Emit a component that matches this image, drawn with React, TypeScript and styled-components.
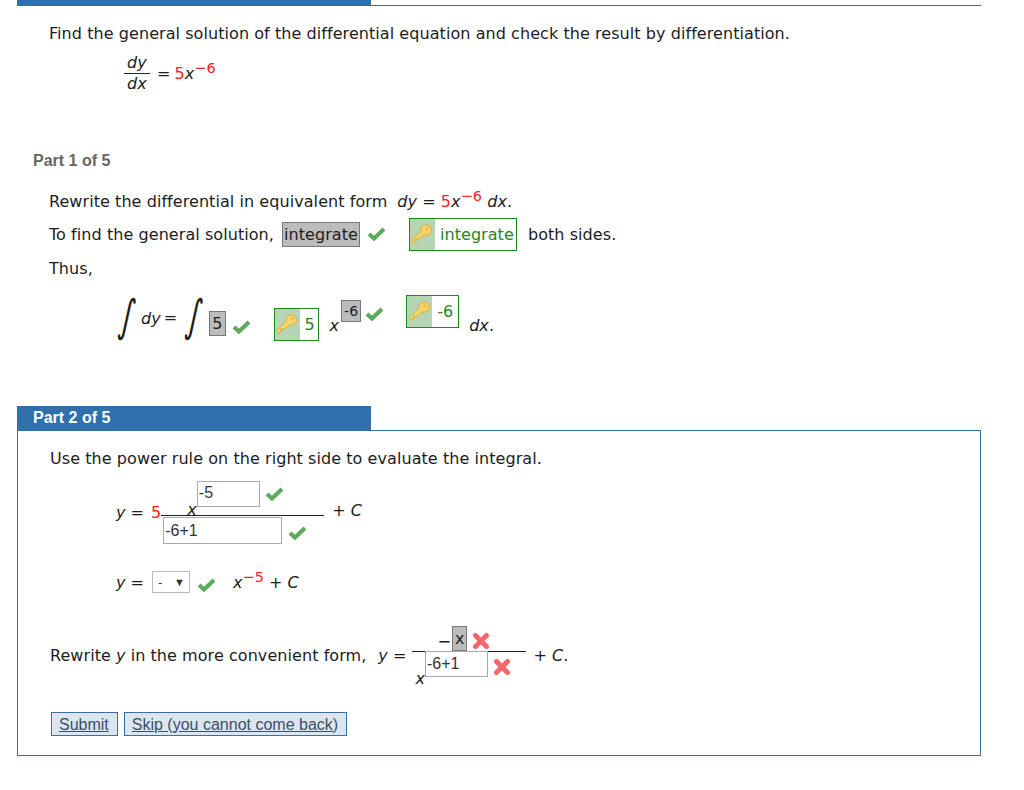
import React from 'react';
import styled, { createGlobalStyle } from 'styled-components';

const GlobalStyle = createGlobalStyle`
  html, body {
    margin: 0;
    padding: 0;
    background: #fff;
  }
  body {
    font-family: "DejaVu Sans", Verdana, sans-serif;
    font-size: 16px;
    letter-spacing: 0.065px;
    color: #1c1c1c;
  }
`;

const Tick: React.FC = () => (
  <TickSvg viewBox="0 0 19 14" width="19" height="14">
    <path d="M2 7 L7 11.5 L17 2" fill="none" stroke="#5cab5c" strokeWidth="4.2" />
  </TickSvg>
);

const Cross: React.FC = () => (
  <TickSvg viewBox="0 0 18 18" width="18" height="18">
    <path d="M3.5 3.5 L14.5 14.5 M14.5 3.5 L3.5 14.5" fill="none" stroke="#f2666c" strokeWidth="5" strokeLinecap="round" />
  </TickSvg>
);

const KeyIcon: React.FC = () => (
  <svg viewBox="0 0 22 22" width="22" height="22">
    <path
      d="M13 2.2 C16.6 0.6 20.8 3.4 20.6 7.4 C20.4 11.2 16.4 13.2 13.2 11.8 L8.4 16.4 L7 15.4 L5.8 17 L4.6 16.2 L4.8 18.6 L2.6 20.4 L1 18.6 L1.4 16.4 L9.6 8.4 C9.2 5.8 10.6 3.2 13 2.2 Z"
      fill="#f5d364"
      stroke="#d6a63c"
      strokeWidth="0.9"
    />
    <ellipse cx="16" cy="5.8" rx="1.6" ry="1.3" fill="#e3b54a" />
  </svg>
);

const KeyAnswer: React.FC<{ text: string; width: number }> = ({ text, width }) => (
  <KeyBox style={{ width }}>
    <KeyPane>
      <KeyIcon />
    </KeyPane>
    <KeyText>{text}</KeyText>
  </KeyBox>
);

export default function App() {
  return (
    <Page>
      <GlobalStyle />
      <TopBar>
        <TopTab />
      </TopBar>

      <Prose $top={16} $left={32}>
        Find the general solution of the differential equation and check the result by differentiation.
      </Prose>
      <MathRow $top={7} $left={107} $height={40}>
        <Fraction $width={26}>
          <Num>dy</Num>
          <Den>dx</Den>
        </Fraction>
        <Op $left={7}>=</Op>
        <Red $left={4}>5</Red>
        <Var>x</Var>
        <Sup>−6</Sup>
      </MathRow>

      <PartLabel $top={58}>Part 1 of 5</PartLabel>

      <Prose $top={19} $left={32}>
        Rewrite the differential in equivalent form
        <Inline>
          <i>dy</i> = <RedText>5</RedText>
          <i>x</i>
          <SupText>−6</SupText> <i>dx</i>.
        </Inline>
      </Prose>
      <MathRow $top={3} $left={32} $height={34}>
        To find the general solution,
        <GrayBox $left={8} $tight>
          integrate
        </GrayBox>
        <Spaced $left={7}>
          <Tick />
        </Spaced>
        <Spaced $left={23}>
          <KeyAnswer text="integrate" width={108} />
        </Spaced>
        <Spaced $left={11}>both sides.</Spaced>
      </MathRow>
      <Prose $top={6} $left={32}>
        Thus,
      </Prose>

      <MathRow $top={7} $left={83} $height={52}>
        <Integral $left={18}>∫</Integral>
        <Var $left={4} $down={4}>
          dy
        </Var>
        <Op $left={3} $down={3}>
          =
        </Op>
        <Integral $left={8}>∫</Integral>
        <Spaced $left={5} $down={9}>
          <GrayBox>5</GrayBox>
        </Spaced>
        <Spaced $left={6} $down={13}>
          <Tick />
        </Spaced>
        <Spaced $left={23} $down={10}>
          <KeyAnswer text="5" width={45} />
        </Spaced>
        <Var $left={11} $down={11}>
          x
        </Var>
        <Spaced $left={2} $down={-3}>
          <GrayBox $small>-6</GrayBox>
        </Spaced>
        <Spaced $left={4} $down={0}>
          <Tick />
        </Spaced>
        <Spaced $left={22} $down={-3}>
          <KeyAnswer text="-6" width={53} />
        </Spaced>
        <Spaced $left={10} $down={11}>
          <i>dx</i>.
        </Spaced>
      </MathRow>

      <PartHeader>Part 2 of 5</PartHeader>
      <Panel>
        <Prose $top={16} $left={0}>
          Use the power rule on the right side to evaluate the integral.
        </Prose>

        <MathRow $top={8} $left={66} $height={66}>
          <Var>y</Var>
          <Op $left={5}>=</Op>
          <Red $left={7}>5</Red>
          <FractionWide>
            <Upper>
              <Var $left={26} $down={19}>
                x
              </Var>
              <FieldBox $w={63} $h={26} $line={21}>
                -5
              </FieldBox>
              <Spaced $left={5} $down={6}>
                <Tick />
              </Spaced>
            </Upper>
            <Lower>
              <FieldBox $left={2} $w={119} $h={27} $line={25}>
                -6+1
              </FieldBox>
              <Spaced $left={6} $down={9}>
                <Tick />
              </Spaced>
            </Lower>
          </FractionWide>
          <Op $left={8} $down={-2}>
            +
          </Op>
          <Var $left={5} $down={-2}>
            C
          </Var>
        </MathRow>

        <MathRow $top={25} $left={66} $height={24}>
          <Var>y</Var>
          <Op $left={5}>=</Op>
          <Dropdown>
            <span>-</span>
            <Caret>▼</Caret>
          </Dropdown>
          <Spaced $left={7} $down={3}>
            <Tick />
          </Spaced>
          <Var $left={17}>x</Var>
          <Sup>−5</Sup>
          <Op $left={5}>+</Op>
          <Var $left={5}>C</Var>
        </MathRow>

        <MathRow $top={28} $left={0} $height={66}>
          Rewrite <Var>y</Var>
          <Spaced $left={5}>in the more convenient form,</Spaced>
          <Var $left={12}>y</Var>
          <Op $left={5}>=</Op>
          <FractionMid>
            <UpperMid>
              <Minus>−</Minus>
              <GrayBox>x</GrayBox>
              <Spaced $left={5} $down={-1}>
                <Cross />
              </Spaced>
            </UpperMid>
            <LowerMid>
              <Var $left={3} $down={18}>
                x
              </Var>
              <FieldBox $w={63} $h={26} $line={24}>
                -6+1
              </FieldBox>
              <Spaced $left={5} $down={7}>
                <Cross />
              </Spaced>
            </LowerMid>
          </FractionMid>
          <Op $left={7}>+</Op>
          <Var $left={5}>C</Var>.
        </MathRow>

        <Actions>
          <ActionButton>Submit</ActionButton>
          <ActionButton>Skip (you cannot come back)</ActionButton>
        </Actions>
      </Panel>
    </Page>
  );
}

const Page = styled.div`
  width: 964px;
  height: 790px;
  margin-left: 17px;
  overflow: hidden;
`;

const TopBar = styled.div`
  height: 6px;
  border-bottom: 1px solid #2f6fab;
  box-sizing: border-box;
`;

const TopTab = styled.div`
  width: 354px;
  height: 6px;
  background: #2f6fab;
`;

const Prose = styled.div<{ $top: number; $left: number }>`
  margin-top: ${(p) => p.$top}px;
  margin-left: ${(p) => p.$left}px;
  line-height: 24px;
  white-space: nowrap;
`;

const Inline = styled.span`
  margin-left: 10px;
  white-space: pre;
`;

const RedText = styled.span`
  color: #f22;
`;

const SupText = styled.sup`
  color: #f22;
  font-size: 14.5px;
  line-height: 0;
  vertical-align: 6px;
`;

const MathRow = styled.div<{ $top: number; $left: number; $height: number }>`
  display: flex;
  align-items: center;
  margin-top: ${(p) => p.$top}px;
  margin-left: ${(p) => p.$left}px;
  height: ${(p) => p.$height}px;
  white-space: pre;
`;

const Spaced = styled.span<{ $left?: number; $down?: number }>`
  display: inline-flex;
  align-items: center;
  margin-left: ${(p) => p.$left ?? 0}px;
  transform: translateY(${(p) => p.$down ?? 0}px);
`;

const Fraction = styled.span<{ $width: number }>`
  display: inline-flex;
  flex-direction: column;
  align-items: center;
  width: ${(p) => p.$width}px;
  font-style: italic;
`;

const Num = styled.span`
  width: 100%;
  text-align: center;
  line-height: 20px;
  border-bottom: 1px solid #222;
`;

const Den = styled.span`
  line-height: 20px;
`;

const Op = styled.span<{ $left?: number; $down?: number }>`
  margin-left: ${(p) => p.$left ?? 0}px;
  transform: translateY(${(p) => p.$down ?? 0}px);
`;

const Red = styled.span<{ $left?: number }>`
  margin-left: ${(p) => p.$left ?? 0}px;
  color: #f22;
`;

const Var = styled.i<{ $left?: number; $down?: number }>`
  margin-left: ${(p) => p.$left ?? 0}px;
  transform: translateY(${(p) => p.$down ?? 0}px);
`;

const Sup = styled.span`
  color: #f22;
  font-size: 14.5px;
  transform: translateY(-5px);
`;

const PartLabel = styled.div<{ $top: number }>`
  margin-top: ${(p) => p.$top}px;
  margin-left: 16px;
  font-family: "Liberation Sans", Arial, sans-serif;
  font-weight: 700;
  font-size: 16px;
  line-height: 20px;
  letter-spacing: 0;
  color: #666;
`;

const GrayBox = styled.span<{ $left?: number; $small?: boolean; $tight?: boolean }>`
  display: inline-block;
  margin-left: ${(p) => p.$left ?? 0}px;
  padding: 0 ${(p) => (p.$tight ? 1 : 2)}px;
  background: #bcbcbc;
  border: 1px solid #777;
  font-size: ${(p) => (p.$small ? 14 : 16)}px;
  line-height: ${(p) => (p.$small ? 20 : 23)}px;
`;

const TickSvg = styled.svg`
  display: block;
`;

const KeyBox = styled.span`
  display: inline-flex;
  align-items: stretch;
  box-sizing: border-box;
  height: 33px;
  border: 1px solid #1c871c;
  background: #fff;
`;

const KeyPane = styled.span`
  display: flex;
  align-items: center;
  justify-content: center;
  width: 25px;
  background: #b5d5b5;
`;

const KeyText = styled.span`
  padding-left: 5px;
  line-height: 31px;
  color: #22861e;
`;

const Integral = styled.span<{ $left?: number }>`
  display: inline-flex;
  justify-content: center;
  width: 19px;
  margin-left: ${(p) => p.$left ?? 0}px;
  font-size: 40px;
  line-height: 52px;
  transform: translateY(2px) scale(0.72, 1.1) skewX(-16deg);
`;

const FractionWide = styled.span`
  display: inline-flex;
  flex-direction: column;
  width: 163px;
  transform: translateY(2px);
`;

const FractionMid = styled.span`
  display: inline-flex;
  flex-direction: column;
  width: 114px;
  margin-left: 6px;
  transform: translateY(-4px);
`;

const Upper = styled.span`
  display: flex;
  align-items: flex-start;
  height: 34px;
  border-bottom: 1px solid #222;
`;

const Lower = styled.span`
  display: flex;
  align-items: flex-start;
  height: 30px;
  padding-top: 1px;
`;

const UpperMid = styled.span`
  display: flex;
  align-items: flex-end;
  height: 26px;
  border-bottom: 1px solid #222;
`;

const LowerMid = styled.span`
  display: flex;
  align-items: flex-start;
  height: 27px;
  margin-top: -1px;
`;

const Minus = styled.span`
  margin-left: 25px;
  margin-right: 1px;
`;

const FieldBox = styled.span<{ $w: number; $h: number; $line: number; $left?: number }>`
  display: inline-block;
  box-sizing: border-box;
  width: ${(p) => p.$w}px;
  height: ${(p) => p.$h}px;
  margin-left: ${(p) => p.$left ?? 0}px;
  padding: 0 1px;
  border: 1px solid #aaa;
  font-family: "Liberation Sans", Arial, sans-serif;
  font-size: 16px;
  line-height: ${(p) => p.$line}px;
  letter-spacing: 0;
  color: #333;
`;

const Dropdown = styled.span`
  display: inline-flex;
  align-items: center;
  justify-content: space-between;
  box-sizing: border-box;
  width: 38px;
  height: 22px;
  margin-left: 8px;
  padding: 0 4px 0 5px;
  border: 1px solid #bbb;
  font-family: "Liberation Sans", Arial, sans-serif;
  font-size: 13px;
  color: #333;
`;

const Caret = styled.span`
  font-size: 11px;
`;

const PartHeader = styled.div`
  box-sizing: border-box;
  width: 354px;
  height: 24px;
  margin-top: 66px;
  padding-left: 16px;
  background: #2f6fab;
  font-family: "Liberation Sans", Arial, sans-serif;
  font-weight: 700;
  font-size: 16px;
  line-height: 23px;
  letter-spacing: 0;
  color: #fff;
`;

const Panel = styled.div`
  box-sizing: border-box;
  height: 326px;
  padding-left: 32px;
  border: 1px solid #2f6fab;
`;

const Actions = styled.div`
  display: flex;
  gap: 6px;
  margin-top: 24px;
  margin-left: 1px;
`;

const ActionButton = styled.button`
  box-sizing: border-box;
  height: 24px;
  padding: 1px 8px 0 7px;
  background: #dce6f1;
  border: 1px solid #3a6ea5;
  font-family: "Liberation Sans", Arial, sans-serif;
  font-size: 16px;
  line-height: 20px;
  color: #3b4f63;
  text-decoration: underline;
`;
